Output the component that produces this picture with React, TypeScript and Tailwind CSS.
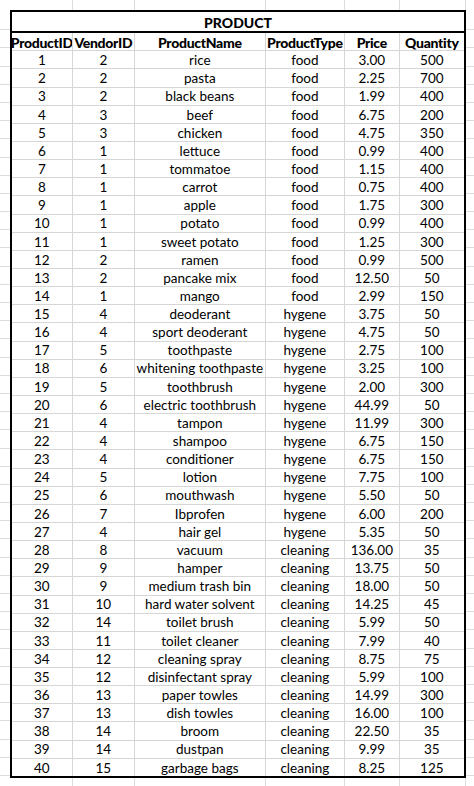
type Product = [number, number, string, string, string, number];

const products: Product[] = [
  [1, 2, "rice", "food", "3.00", 500],
  [2, 2, "pasta", "food", "2.25", 700],
  [3, 2, "black beans", "food", "1.99", 400],
  [4, 3, "beef", "food", "6.75", 200],
  [5, 3, "chicken", "food", "4.75", 350],
  [6, 1, "lettuce", "food", "0.99", 400],
  [7, 1, "tommatoe", "food", "1.15", 400],
  [8, 1, "carrot", "food", "0.75", 400],
  [9, 1, "apple", "food", "1.75", 300],
  [10, 1, "potato", "food", "0.99", 400],
  [11, 1, "sweet potato", "food", "1.25", 300],
  [12, 2, "ramen", "food", "0.99", 500],
  [13, 2, "pancake mix", "food", "12.50", 50],
  [14, 1, "mango", "food", "2.99", 150],
  [15, 4, "deoderant", "hygene", "3.75", 50],
  [16, 4, "sport deoderant", "hygene", "4.75", 50],
  [17, 5, "toothpaste", "hygene", "2.75", 100],
  [18, 6, "whitening toothpaste", "hygene", "3.25", 100],
  [19, 5, "toothbrush", "hygene", "2.00", 300],
  [20, 6, "electric toothbrush", "hygene", "44.99", 50],
  [21, 4, "tampon", "hygene", "11.99", 300],
  [22, 4, "shampoo", "hygene", "6.75", 150],
  [23, 4, "conditioner", "hygene", "6.75", 150],
  [24, 5, "lotion", "hygene", "7.75", 100],
  [25, 6, "mouthwash", "hygene", "5.50", 50],
  [26, 7, "Ibprofen", "hygene", "6.00", 200],
  [27, 4, "hair gel", "hygene", "5.35", 50],
  [28, 8, "vacuum", "cleaning", "136.00", 35],
  [29, 9, "hamper", "cleaning", "13.75", 50],
  [30, 9, "medium trash bin", "cleaning", "18.00", 50],
  [31, 10, "hard water solvent", "cleaning", "14.25", 45],
  [32, 14, "toilet brush", "cleaning", "5.99", 50],
  [33, 11, "toilet cleaner", "cleaning", "7.99", 40],
  [34, 12, "cleaning spray", "cleaning", "8.75", 75],
  [35, 12, "disinfectant spray", "cleaning", "5.99", 100],
  [36, 13, "paper towles", "cleaning", "14.99", 300],
  [37, 13, "dish towles", "cleaning", "16.00", 100],
  [38, 14, "broom", "cleaning", "22.50", 35],
  [39, 14, "dustpan", "cleaning", "9.99", 35],
  [40, 15, "garbage bags", "cleaning", "8.25", 125],
];

const headers = ["ProductID", "VendorID", "ProductName", "ProductType", "Price", "Quantity"];

const cols = "grid grid-cols-[60.7px_62.3px_130.7px_79.3px_54.7px_1fr]";
const outerCols = "grid grid-cols-[72.7px_62.3px_130.7px_79.3px_54.7px_66.3px_1fr]";

function Cell({ children, last, bold }: { children?: React.ReactNode; last?: boolean; bold?: boolean }) {
  return (
    <div
      className={`flex items-center justify-center overflow-hidden whitespace-nowrap pt-[2px] leading-none ${
        last ? "" : "border-r border-[#d6d6d6]"
      } ${bold ? "text-[14px] font-black tracking-[-0.3px]" : ""}`}
    >
      {children}
    </div>
  );
}

function Gutter() {
  return (
    <div className="flex flex-col">
      <div className="h-[2px]" />
      {Array.from({ length: 42 }).map((_, i) => (
        <div key={i} className="flex-1 border-b border-[#dcdcdc]" />
      ))}
      <div className="h-[2px]" />
    </div>
  );
}

function Strip({ height }: { height: string }) {
  return (
    <div className={`${outerCols} ${height}`}>
      {Array.from({ length: 7 }).map((_, i) => (
        <div key={i} className={i < 6 ? "border-r border-[#dcdcdc]" : ""} />
      ))}
    </div>
  );
}

export default function App() {
  return (
    <div
      className="flex h-[786px] w-[474px] flex-col overflow-hidden bg-white text-[13.5px] text-black"
      style={{ fontFamily: "Lato, 'Open Sans', sans-serif" }}
    >
      <Strip height="h-[10px]" />
      <div className="grid h-[768px] grid-cols-[10px_456px_1fr]">
        <Gutter />
        <div className="flex flex-col border-2 border-black">
          <div className="flex flex-1 items-center justify-center border-b-2 border-black pt-[2px] text-[14px] font-black leading-none">
            PRODUCT
          </div>
          <div className={`${cols} flex-1 border-b border-[#d6d6d6]`}>
            {headers.map((h, i) => (
              <Cell key={h} bold last={i === 5}>
                {h}
              </Cell>
            ))}
          </div>
          {products.map((p, r) => (
            <div
              key={p[0]}
              className={`${cols} flex-1 ${r < products.length - 1 ? "border-b border-[#d6d6d6]" : ""}`}
            >
              {p.map((v, i) => (
                <Cell key={i} last={i === 5}>
                  {v}
                </Cell>
              ))}
            </div>
          ))}
        </div>
        <Gutter />
      </div>
      <Strip height="flex-1" />
    </div>
  );
}
